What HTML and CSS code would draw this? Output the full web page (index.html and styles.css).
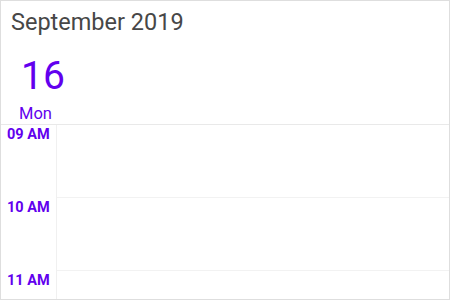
FILE: index.html
```html
<!DOCTYPE html>
<html>
<head>
<meta charset="utf-8">
<link rel="stylesheet" href="styles.css">
</head>
<body>
<div class="calendar">
  <div class="header">September 2019</div>
  <div class="view-header">
    <div class="date">16</div>
    <div class="weekday">Mon</div>
  </div>
  <div class="grid">
    <div class="times">
      <div class="time">09 AM</div>
      <div class="time">10 AM</div>
      <div class="time">11 AM</div>
    </div>
    <div class="day">
      <div class="slot"></div>
      <div class="slot"></div>
      <div class="slot"></div>
    </div>
  </div>
</div>
</body>
</html>
```
FILE: styles.css
```css
html, body {
  margin: 0;
  padding: 0;
  background: #ffffff;
}
.calendar {
  width: 450px;
  height: 300px;
  box-sizing: border-box;
  border: 1px solid #dedede;
  overflow: hidden;
  font-family: Roboto, "Liberation Sans", sans-serif;
  background: #ffffff;
}
.header {
  padding: 6px 0 0 10px;
  height: 30px;
  line-height: 30px;
  font-size: 23.5px;
  color: #474747;
}
.view-header {
  padding: 19px 0 0 18px;
  height: 68px;
  border-bottom: 1px solid #e9e9e9;
  color: #6200ee;
}
.date {
  margin-left: 2px;
  font-size: 39px;
  line-height: 40px;
  height: 40px;
}
.weekday {
  margin-top: 8px;
  font-size: 16.5px;
  line-height: 20px;
}
.grid {
  display: flex;
}
.times {
  width: 55px;
  border-right: 1px solid #f0f0f0;
}
.time {
  height: 71px;
  padding: 2px 0 0 6px;
  font-size: 14.5px;
  line-height: 16px;
  font-weight: 700;
  color: #6200ee;
}
.day {
  flex: 1;
}
.slot {
  height: 72px;
  border-bottom: 1px solid #f2f2f2;
}
```
